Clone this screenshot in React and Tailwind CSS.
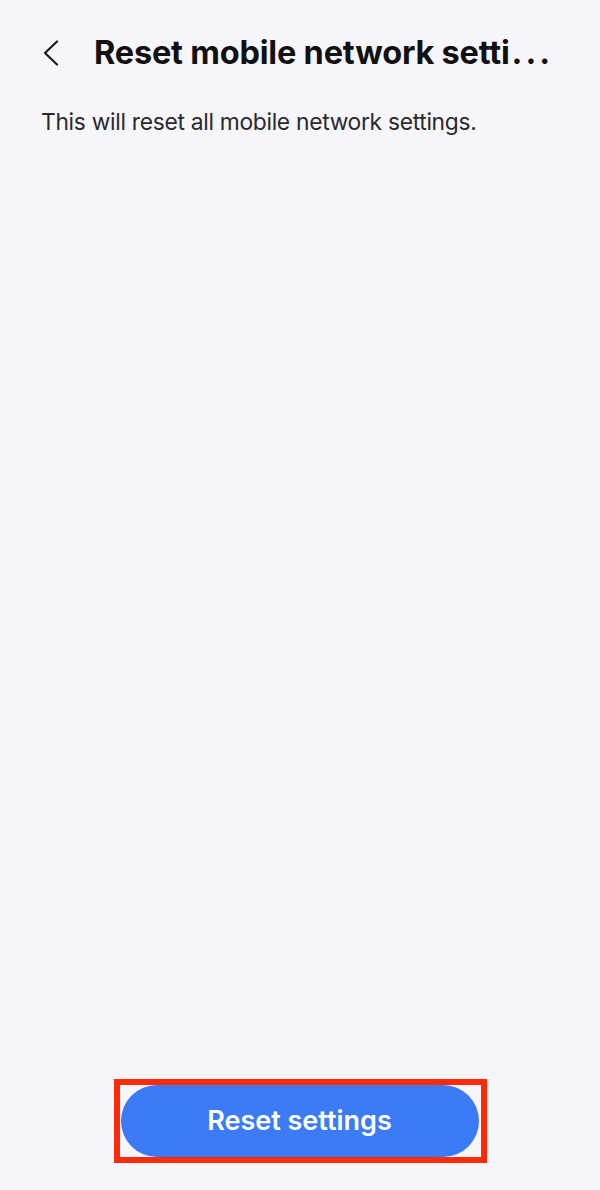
import React from "react";

function BackIcon() {
  return (
    <svg width="18" height="26" viewBox="0 0 18 26" fill="none">
      <path
        d="M15 1.5 L3 13 L15 24.5"
        stroke="#1a1a1a"
        strokeWidth="2.2"
        strokeLinecap="round"
        strokeLinejoin="round"
      />
    </svg>
  );
}

export default function App() {
  return (
    <div
      className="flex h-[1190px] w-[600px] flex-col bg-[#f6f5fa]"
      style={{ fontFamily: "Inter, 'Noto Sans', sans-serif" }}
    >
      <header className="flex items-center pl-[42px] pr-[30px] pt-[38px]">
        <button className="flex h-[30px] w-[20px] items-center">
          <BackIcon />
        </button>
        <h1 className="ml-[32px] whitespace-nowrap text-[32.5px] font-bold leading-[30px] tracking-[-0.2px] text-[#111]">
          Reset mobile network setti<span className="ml-[2px] tracking-[3px]">...</span>
        </h1>
      </header>

      <p className="mt-[39px] px-[41px] text-[22.8px] leading-[30px] tracking-[-0.3px] text-[#2a2a2a]">
        This will reset all mobile network settings.
      </p>

      <div className="flex-1" />

      <div className="flex justify-center pb-[27px]">
        <div className="border-[6px] border-[#ff2a0a] pl-[1px] pr-[2px]">
          <button className="flex h-[72px] w-[358px] items-center justify-center rounded-full bg-[#3b7cf6] text-[27px] font-semibold text-white">
            Reset settings
          </button>
        </div>
      </div>
    </div>
  );
}
